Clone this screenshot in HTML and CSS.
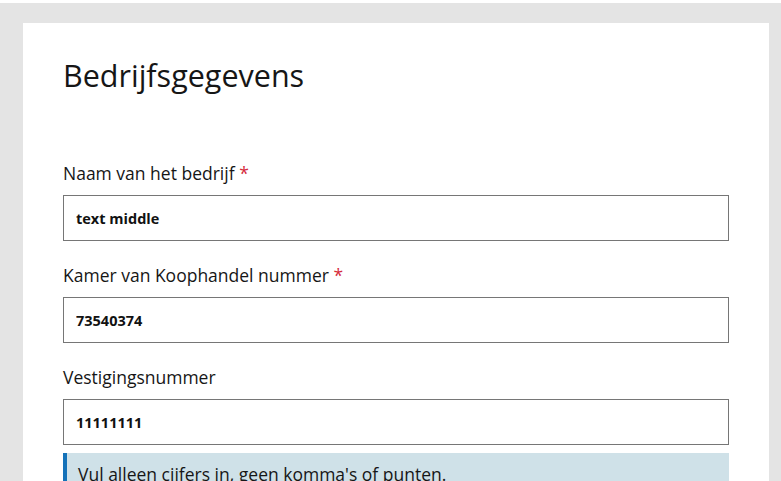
FILE: index.html
```html
<!DOCTYPE html>
<html lang="nl">

<head>
    <meta charset="UTF-8">
    <meta name="viewport" content="width=device-width, initial-scale=1.0">
    <title>Bedrijfsgegevens</title>
    <link rel="stylesheet" href="styles.css">
</head>

<body>
    <div class="page">
        <div class="card">
            <h1 class="title">Bedrijfsgegevens</h1>

            <div class="field">
                <label class="label" for="naam">Naam van het bedrijf <span class="req">*</span></label>
                <input class="input" id="naam" type="text" value="text middle">
            </div>

            <div class="field">
                <label class="label" for="kvk">Kamer van Koophandel nummer <span class="req">*</span></label>
                <input class="input" id="kvk" type="text" value="73540374">
            </div>

            <div class="field">
                <label class="label" for="vestiging">Vestigingsnummer</label>
                <input class="input" id="vestiging" type="text" value="11111111">
                <div class="hint">Vul alleen cijfers in, geen komma's of punten.</div>
            </div>
        </div>
    </div>
</body>

</html>
```

FILE: styles.css
```css
* {
    margin: 0;
    padding: 0;
    box-sizing: border-box;
}

html,
body {
    height: 100%;
    background-color: #fff;
}

body {
    font-family: "Open Sans", "Noto Sans", sans-serif;
    color: #161616;
    overflow: hidden;
}

.page {
    margin-top: 3px;
    min-height: 100%;
    background-color: #e4e4e4;
    padding: 20px 12px 0 23px;
}

.card {
    background-color: #fff;
    min-height: 500px;
    padding: 32px 40px 40px 40px;
}

.title {
    font-size: 30.5px;
    font-weight: 400;
    line-height: 40px;
    margin-bottom: 65px;
}

.field {
    margin-bottom: 21px;
}

.field .label {
    display: block;
    font-size: 17.5px;
    line-height: 27px;
    margin-bottom: 8px;
}

.field .label .req {
    color: #d52b3c;
}

.field .input {
    display: block;
    width: 100%;
    height: 46px;
    border: 1px solid #767676;
    padding: 0 12px;
    font-family: inherit;
    font-size: 14.5px;
    font-weight: 700;
    color: #111;
    background-color: #fff;
    outline: none;
}

.field .hint {
    margin-top: 8px;
    background-color: #cfe1e8;
    border-left: 4px solid #1472b9;
    padding: 8px 11px;
    font-size: 17.5px;
    line-height: 27px;
}
```
